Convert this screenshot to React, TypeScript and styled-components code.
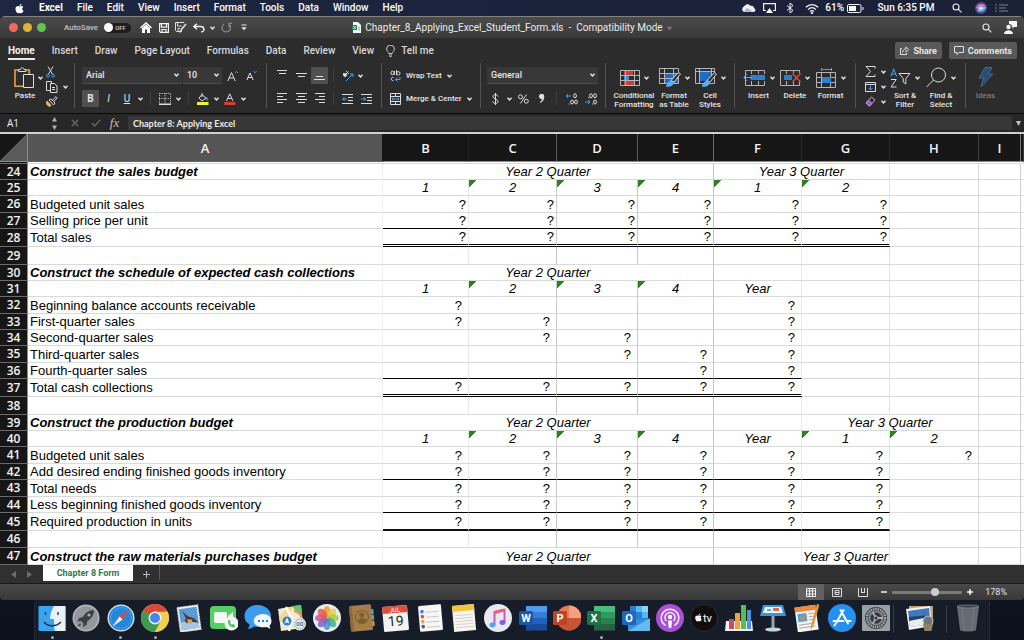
import React from 'react';
import styled, { createGlobalStyle, css } from 'styled-components';
import { FaApple } from 'react-icons/fa';

const ui = "Roboto, 'Liberation Sans', sans-serif";
const sheetFont = "'Liberation Sans', Arial, sans-serif";
const headFont = "'Open Sans', Lato, sans-serif";

const Global = createGlobalStyle`
  *, *::before, *::after { box-sizing: border-box; }
  html, body { margin: 0; background: #0c121d; }
  body { font-family: ${ui}; font-size: 10px; line-height: 12px; color: #fff; overflow: hidden; }
  button, select, input { font: inherit; color: inherit; margin: 0; padding: 0; border: 0; background: none; }
  svg { display: block; flex: none; }
`;

const Desktop = styled.div`
  min-height: 100vh;
  display: flex;
  flex-direction: column;
  background: linear-gradient(#1c2540, #0c121d 97%);
`;

/* ---------- system menu bar ---------- */
const MenuBar = styled.header`
  height: 16px;
  display: flex;
  align-items: center;
  justify-content: space-between;
  padding: 0 15px 0 14px;
  background: linear-gradient(90deg, #1d2742, #1a2036);
`;
const Menus = styled.nav`
  display: flex;
  align-items: center;
  gap: 14px;
`;
const MenuButton = styled.button<{ $strong?: boolean }>`
  font-weight: ${p => (p.$strong ? 700 : 500)};
  white-space: nowrap;
`;
const MenuExtras = styled.div`
  display: flex;
  align-items: center;
  font-weight: 500;
  white-space: nowrap;
`;
const Extra = styled.span<{ $w: number }>`
  width: ${p => p.$w}px;
  display: flex;
  justify-content: center;
`;

/* ---------- window ---------- */
const Window = styled.main`
  flex: 1;
  display: flex;
  flex-direction: column;
  border-radius: 5px 5px 4px 4px;
  overflow: hidden;
  background: #2c2c2c;
`;
const TitleBar = styled.div`
  height: 22px;
  display: grid;
  grid-template-columns: 1fr auto 1fr;
  align-items: center;
  border-top: 1px solid #828282;
  background: linear-gradient(#4b4b4b, #3a3a3a);
  color: #ececec;
`;
const TitleLeft = styled.div`
  display: flex;
  align-items: center;
  padding-left: 9px;
`;
const Lights = styled.div`
  display: flex;
  gap: 5px;
  width: 55px;
`;
const Light = styled.button<{ $c: string }>`
  width: 9px;
  height: 9px;
  border-radius: 50%;
  background: ${p => p.$c};
`;
const AutoSave = styled.label`
  display: flex;
  align-items: center;
  gap: 6px;
  width: 73px;
  font-size: 8px;
  font-weight: 500;
  white-space: nowrap;
  color: #c4c4c4;
`;
const Switch = styled.span`
  width: 27px;
  height: 10px;
  border-radius: 5px;
  background: #1d1d1d;
  display: flex;
  align-items: center;
  gap: 2px;
  font-size: 6px;
  color: #cfcfcf;
`;
const SwitchInput = styled.input`
  appearance: none;
  width: 9px;
  height: 9px;
  border-radius: 50%;
  background: #fff;
`;
const DocTitle = styled.h1`
  margin: 0;
  display: flex;
  align-items: center;
  gap: 4px;
  font-size: 10px;
  font-weight: 400;
  white-space: pre;
`;
const TitleRight = styled.div`
  display: flex;
  justify-content: flex-end;
  align-items: center;
  gap: 12px;
  padding-right: 7px;
`;

const Tabs = styled.nav`
  height: 25px;
  display: flex;
  align-items: center;
  gap: 17px;
  padding: 0 7px 0 8px;
  color: #d8d8d8;
  font-weight: 500;
`;
const TabButton = styled.button<{ $on?: boolean }>`
  height: 18px;
  padding-top: 2px;
  white-space: nowrap;
  border-bottom: 2px solid ${p => (p.$on ? '#e8e8e8' : 'transparent')};
  ${p => p.$on && css`font-weight: 700; color: #f2f2f2;`}
`;
const TellMe = styled.button`
  display: flex;
  align-items: center;
  gap: 6px;
  margin-right: auto;
  margin-left: -5px;
`;
const ActionButton = styled.button`
  height: 17px;
  display: flex;
  align-items: center;
  gap: 4px;
  padding: 0 5px;
  border-radius: 2px;
  background: #595959;
  color: #e6e6e6;
  font-size: 9px;
  font-weight: 700;
`;
const Actions = styled.div`
  display: flex;
  gap: 7px;
`;

/* ---------- ribbon ---------- */
const Ribbon = styled.section`
  height: 51px;
  display: flex;
  border-bottom: 1px solid #0a0a0a;
  font-size: 8px;
  line-height: 9px;
  font-weight: 500;
  color: #e6e6e6;
`;
const Group = styled.div<{ $w: number; $last?: boolean }>`
  width: ${p => p.$w}px;
  height: 45px;
  padding-top: 1px;
  flex: none;
  display: flex;
  flex-direction: column;
  border-right: 1px solid ${p => (p.$last ? 'transparent' : '#525252')};
`;
const Line = styled.div<{ $pad?: number }>`
  height: 23px;
  flex: none;
  display: flex;
  align-items: center;
  padding-left: ${p => p.$pad ?? 7}px;
`;
const Tool = styled.button<{ $w: number; $on?: boolean }>`
  width: ${p => p.$w}px;
  height: 17px;
  flex: none;
  display: flex;
  align-items: center;
  justify-content: center;
  border-radius: 1px;
  font-size: 10px;
  font-weight: 400;
  background: ${p => (p.$on ? '#505050' : 'none')};
`;
const LabelTool = styled.button`
  display: flex;
  align-items: center;
  gap: 5px;
  white-space: nowrap;
`;
const Divider = styled.span`
  width: 1px;
  height: 13px;
  background: #424242;
  margin: 0 5px;
`;
const Picker = styled.label<{ $w: number }>`
  width: ${p => p.$w}px;
  height: 17px;
  display: grid;
  align-items: center;
  margin-right: 1px;
  background: #383838;
  border-bottom: 1px solid #4c4c4c;
  font-size: 9px;
  > * { grid-area: 1 / 1; }
  > svg { justify-self: end; margin-right: 3px; pointer-events: none; }
`;
const PickerSelect = styled.select`
  appearance: none;
  width: 100%;
  padding-left: 4px;
  outline: none;
`;
const BigTools = styled.div<{ $pad: number }>`
  display: flex;
  height: 46px;
  flex: none;
  padding-left: ${p => p.$pad}px;
`;
const BigTool = styled.button<{ $w: number; $dim?: boolean }>`
  width: ${p => p.$w}px;
  flex: none;
  display: flex;
  flex-direction: column;
  align-items: center;
  justify-content: flex-start;
  line-height: 9px;
  white-space: pre;
  color: ${p => (p.$dim ? '#7d7d7d' : 'inherit')};
`;
const BigArt = styled.span`
  height: 27px;
  display: flex;
  align-items: center;
  gap: 4px;
`;
const Stack = styled.div<{ $w: number }>`
  width: ${p => p.$w}px;
  display: flex;
  flex-direction: column;
`;
const StackTool = styled.button`
  height: 15px;
  display: flex;
  align-items: center;
  gap: 5px;
`;

/* ---------- formula bar ---------- */
const FormulaBar = styled.div`
  height: 18px;
  display: flex;
  align-items: center;
  background: #272727;
  font-family: ${headFont};
  font-size: 10px;
  color: #ececec;
`;
const NameBox = styled.input`
  width: 50px;
  padding-left: 7px;
`;
const FormulaInput = styled.input`
  flex: 1;
  min-width: 0;
  height: 14px;
  padding-left: 5px;
  background: #373737;
  font-family: Lato, sans-serif;
  font-size: 9px;
  font-weight: 700;
`;
const MarkButton = styled.button<{ $w: number }>`
  width: ${p => p.$w}px;
  height: 16px;
  display: flex;
  justify-content: center;
  align-items: center;
`;
const Serif = styled.i`
  font-family: 'Liberation Serif', serif;
  font-size: 13px;
  color: #c2c2c2;
`;

/* ---------- sheet ---------- */
const SheetArea = styled.section`
  flex: 1;
  overflow: hidden;
  border-top: 2px solid #d0d0d0;
  background: #fff;
`;
const Sheet = styled.table`
  width: 100%;
  table-layout: fixed;
  border-collapse: separate;
  border-spacing: 0;
  font-family: ${sheetFont};
  font-size: 13px;
  line-height: 14px;
  color: #000;
`;
const ColHead = styled.th<{ $on?: boolean; $edge?: string }>`
  height: 28px;
  padding: 0;
  font-family: ${headFont};
  font-size: 13px;
  font-weight: 600;
  color: #f4f4f4;
  background: ${p => (p.$on ? '#555' : '#161616')};
  border-right: 1px solid ${p => p.$edge ?? '#3a3a3a'};
  border-bottom: 1px solid ${p => (p.$on ? '#3d7d52' : '#8a8a8a')};
`;
const Corner = styled.th`
  padding: 0;
  background: linear-gradient(135deg, #161616 50%, #5a5a5a 50%);
  border: 1px solid #8c8c8c;
  border-width: 0 1px 1px 0;
`;
const SheetRow = styled.tr<{ $h: number }>`
  height: ${p => p.$h}px;
`;
const RowHead = styled.th`
  padding: 0;
  background: #161616;
  border-right: 1px solid #8c8c8c;
  border-bottom: 1px solid #6a6a6a;
  font-family: ${headFont};
  font-size: 12px;
  font-weight: 600;
  color: #f4f4f4;
`;
type Rule = 'single' | 'double' | 'thick';
const ruleBorder = { single: '1px solid #000', double: '3px double #000', thick: '2px solid #111' };
const Cell = styled.td<{ $edge?: string; $rule?: Rule; $flag?: boolean; $align?: string; $pad?: number; $kind?: string }>`
  padding: 1px ${p => p.$pad ?? 0}px 0 ${p => (p.$align === 'left' ? 2 : 0)}px;
  white-space: nowrap;
  text-align: ${p => p.$align ?? 'center'};
  border-right: 1px solid ${p => p.$edge ?? '#e6e6e6'};
  border-bottom: ${p => (p.$rule ? ruleBorder[p.$rule] : '1px solid #dadada')};
  ${p => p.$flag && css`background: linear-gradient(135deg, #2f8020 50%, transparent 50%) 0 0 / 8px 8px no-repeat;`}
  ${p => p.$kind === 'italic' && css`font-style: italic;`}
  ${p => p.$kind === 'title' && css`font-style: italic; font-weight: 700;`}
`;

/* ---------- bottom of window ---------- */
const SheetTabs = styled.nav`
  height: 19px;
  display: flex;
  align-items: flex-start;
  background: #303030;
  border-bottom: 1px solid #1a1a1a;
`;
const Arrow = styled.button<{ $w: number }>`
  width: ${p => p.$w}px;
  height: 18px;
  display: flex;
  align-items: center;
  justify-content: center;
`;
const SheetTab = styled.button`
  width: 90px;
  height: 16px;
  background: #fff;
  color: #2f7a4a;
  font-size: 9px;
  font-weight: 700;
`;
const TabEnd = styled.span`
  width: 1px;
  height: 15px;
  background: #5a5a5a;
`;
const StatusBar = styled.footer`
  height: 16px;
  display: flex;
  justify-content: flex-end;
  align-items: center;
  padding-right: 17px;
  background: linear-gradient(#4a4a4a, #383838);
  font-size: 9px;
  color: #e0e0e0;
`;
const ViewButton = styled.button<{ $on?: boolean }>`
  width: 26px;
  height: 16px;
  display: flex;
  align-items: center;
  justify-content: center;
  background: ${p => (p.$on ? '#606060' : 'none')};
`;
const ZoomButton = styled.button<{ $w: number }>`
  width: ${p => p.$w}px;
  height: 16px;
  display: flex;
  align-items: center;
  justify-content: center;
`;
const ZoomSlider = styled.input`
  appearance: none;
  width: 70px;
  height: 3px;
  border-radius: 1px;
  background: #7a7a7a;
  &::-webkit-slider-thumb {
    appearance: none;
    width: 8px;
    height: 8px;
    border-radius: 50%;
    background: #cdcdcd;
  }
`;
const Percent = styled.output`
  margin-left: 7px;
`;

/* ---------- dock ---------- */
const Dock = styled.nav`
  height: 40px;
  flex: none;
  margin: 0 34px;
  display: flex;
  background: #171c29;
  border: 1px solid #252b3a;
  border-width: 0 1px;
  border-radius: 4px 4px 0 0;
`;
const DockApps = styled.div`
  flex: 1;
  display: grid;
  grid-template-columns: repeat(25, 1fr);
`;
const DockItem = styled.button<{ $w?: number; $running?: boolean }>`
  ${p => p.$w && css`width: ${p.$w}px;`}
  display: flex;
  flex-direction: column;
  align-items: center;
  justify-content: flex-start;
  padding-top: 4px;
  gap: 4px;
  &::after {
    content: '';
    width: 3px;
    height: 3px;
    border-radius: 50%;
    background: ${p => (p.$running ? '#a5abb8' : 'transparent')};
  }
`;
const DockLine = styled.span`
  width: 1px;
  height: 28px;
  margin-top: 5px;
  background: #373d4b;
`;

/* ---------- small drawings ---------- */
type ArtProps = { w: number; h: number; children: React.ReactNode; s?: string };
const Art = ({ w, h, children, s = '#dcdcdc' }: ArtProps) => (
  <svg width={w} height={h} viewBox={`0 0 ${w} ${h}`} fill="none" stroke={s} strokeWidth="1" aria-hidden="true">{children}</svg>
);
const Chevron = ({ c = '#e8e8e8' }: { c?: string }) => (
  <Art w={5} h={4} s={c}><path d="M.5 .7 2.500 2.900 4.500 .7" strokeWidth="1.400" /></Art>
);
const Search = ({ size, c = '#e8e8e8' }: { size: number; c?: string }) => (
  <svg width={size} height={size} viewBox="0 0 10 10" fill="none" stroke={c} strokeWidth="1.1" aria-hidden="true">
    <circle cx="4" cy="4" r="3" /><path d="M6.2 6.2 9.4 9.4" />
  </svg>
);
const Bars = ({ lines }: { lines: [number, number, number][] }) => (
  <Art w={11} h={11}>{lines.map(([x, y, w], i) => <path key={i} d={`M${x} ${y + 0.5}h${w}`} />)}</Art>
);
const Indent = ({ dir }: { dir: 'left' | 'right' }) => (
  <Art w={12} h={10}>
    <path d="M0 .5h11M6 3.5h5M6 6.5h5M0 9.5h11" />
    <path stroke="#4aa3e8" d={dir === 'left' ? 'M5 5H.8M2.6 3 .6 5l2 2' : 'M0 5h4.4M2.8 3l2 2-2 2'} />
  </Art>
);
const Decimals = ({ more }: { more: boolean }) => (
  <Art w={13} h={12}>
    <path stroke="#4aa3e8" d={more ? 'M6 3H1M3 1 1 3l2 2' : 'M1 9h5M4 7l2 2-2 2'} />
    <ellipse cx={more ? 10 : 11} cy="2.8" rx="1.4" ry="2" /><ellipse cx="11" cy="9" rx="1.4" ry="2" />
    {more ? <ellipse cx="7" cy="9" rx="1.4" ry="2" /> : <ellipse cx="7" cy="2.8" rx="1.4" ry="2" />}
    <path d={more ? 'M4.2 10.5v1' : 'M8.7 10.5v1M4.7 4.3v1'} />
  </Art>
);
const GridLines = ({ y = 0 }: { y?: number }) => (
  <path stroke="#b4b4b4" d={`M.5 ${y + 0.5}h19v15h-19zM.5 ${y + 5.5}h19M.5 ${y + 10.5}h19M5.5 ${y + 0.5}v15M14.5 ${y + 0.5}v15`} />
);

const PasteIcon = () => (
  <Art w={20} h={21}>
    <path stroke="#e9a33b" strokeWidth="1.6" d="M4.5 3H1v16.2h8M12 3h3.3v4" />
    <path d="M4.5 4.5v-2h2c0-2.4 3.4-2.4 3.4 0h2v2z" />
    <path fill="#2c2c2c" d="M9.5 7.5h10v13h-10z" />
  </Art>
);
const CutIcon = () => (
  <Art w={9} h={12}><path d="M2 .5 6.4 8M7 .5 2.6 8" /><circle cx="1.9" cy="9.7" r="1.4" stroke="#4aa3e8" /><circle cx="7.1" cy="9.7" r="1.4" stroke="#4aa3e8" /></Art>
);
const CopyIcon = () => (
  <Art w={12} h={12}><path d="M4 9.5H.5v-9h5v2M4.5 2.5h4l2.5 2.5v6.5h-6.5zM6 6.5h3M6 8.5h3" /></Art>
);
const BrushIcon = () => (
  <Art w={12} h={11}>
    <path fill="#e9b765" stroke="#e9b765" d="m1 5 4 4.500-2 1-2.500-2.500z" /><path fill="#2c2c2c" d="m3 4 2-1 4 4-1.500 2zM6.500 4 10 .6l1.200 1.200L8 5.500" />
  </Art>
);
const CondIcon = () => (
  <Art w={20} h={16}>
    <path fill="#c9403a" stroke="none" d="M4 0h9v5H4zM4 11h10v5H4z" /><path fill="#3f8fd8" stroke="none" d="M4 5.5h5v5H4z" /><GridLines />
  </Art>
);
const TableIcon = ({ solid }: { solid?: boolean }) => (
  <Art w={22} h={19}>
    <path fill="#1f6cc4" stroke="none" d={solid ? 'M4 3h12v10H4z' : 'M6 6h13v10H6z'} />
    {solid ? <path stroke="#b4b4b4" d="M.5 .5h19v15H.5zM.5 3.5h19M4.500 .5v15M16.500 .5v12" /> : <GridLines />}
    <path fill="#2c2c2c" d="m12 12.500 7.500-8 2 1.500L15 14z" />
    <path fill="#5aaef2" stroke="#5aaef2" d="M7 18c2-.4 2-4.800 4.800-5.200l2.700 2C14 18 10 19 7 18z" />
  </Art>
);
const InsertIcon = () => (
  <Art w={23} h={16}>
    <path stroke="#b4b4b4" d="M2.500 .5h19v15h-19zM8.500 .5v15M15.500 .5v15" /><path fill="#2f7fd0" stroke="#2c2c2c" d="M7 4.500h15.500v6H7z" />
    <path stroke="#5aaef2" d="M9 7.500H1M4 4.200.8 7.500 4 10.800" />
  </Art>
);
const DeleteIcon = () => (
  <Art w={21} h={16}>
    <path stroke="#b4b4b4" d="M.5 .5h19v15H.5zM6.500 .5v15M13.500 .5v15" /><path fill="#2f7fd0" stroke="#2c2c2c" d="M3.500 4.500h9v6h-9z" /><path stroke="none" fill="#2c2c2c" d="M13 3h8v9h-8z" />
    <path stroke="#e0503f" strokeWidth="1.3" d="m12.500 3.500 8 8.500M20.500 3.500l-8 8.500" />
  </Art>
);
const FormatIcon = () => (
  <Art w={21} h={20}><path stroke="#4aa3e8" d="M5.500 0v3M15.500 0v3M5.500 1.500h10" /><GridLines y={4} /><path fill="#2f7fd0" stroke="none" d="M6 9h9v6H6z" /></Art>
);
const SortIcon = () => (
  <Art w={21} h={20}>
    <path stroke="#4aa3e8" d="M.8 8.500 3.700.8l2.900 7.700M1.800 6h3.800" /><path d="M1 11.500h5.200L1 19h5.500" /><path d="M9 5.500h11l-4.200 5v5.500l-2.600-2v-3.500z" />
  </Art>
);
const FindIcon = () => (
  <Art w={21} h={21}><circle cx="12.500" cy="8" r="7" /><path d="M7.500 13 .6 20" /></Art>
);
const BoltIcon = () => (
  <Art w={16} h={21} s="#44678c"><path fill="#2c4d70" d="M7 .5h7l-3.500 6.500h4.500L3 20l2.500-9H1z" /></Art>
);

/* ---------- sheet data ---------- */
const columns = [
  { id: 'B', w: 86, edge: '#e9e9e9', head: '#262626' },
  { id: 'C', w: 88, edge: '#c9c9c9', head: '#5c5c5c' },
  { id: 'D', w: 81, edge: '#c9c9c9', head: '#5c5c5c' },
  { id: 'E', w: 76, edge: '#c4c4c4', head: '#6c6c6c' },
  { id: 'F', w: 88, edge: '#e9e9e9', head: '#2a2a2a' },
  { id: 'G', w: 88, edge: '#e2e2e2', head: '#2a2a2a' },
  { id: 'H', w: 89, edge: '#d8d8d8', head: '#444' },
  { id: 'I', w: 42, edge: '#cfcfcf', head: '#777' },
];
type RowSpec = {
  n: number; h: number; label?: string; title?: boolean; marks?: string; indent?: boolean;
  heads?: Record<string, string>; flags?: string; spans?: Record<string, [number, string]>;
  rule?: Rule; ruled?: string;
};
const y2: Record<string, [number, string]> = { B: [4, 'Year 2 Quarter'] };
const rows: RowSpec[] = [
  { n: 24, h: 16, label: 'Construct the sales budget', title: true, spans: { ...y2, F: [2, 'Year 3 Quarter'] } },
  { n: 25, h: 16, heads: { B: '1', C: '2', D: '3', E: '4', F: '1', G: '2' }, flags: 'CDEFG' },
  { n: 26, h: 17, label: 'Budgeted unit sales', marks: 'BCDEFG' },
  { n: 27, h: 16, label: 'Selling price per unit', marks: 'BCDEFG', rule: 'single', ruled: 'BCDEFG' },
  { n: 28, h: 18, label: 'Total sales', marks: 'BCDEFG', rule: 'double', ruled: 'BCDEFG' },
  { n: 29, h: 18 },
  { n: 30, h: 16, label: 'Construct the schedule of expected cash collections', title: true, spans: y2 },
  { n: 31, h: 16, heads: { B: '1', C: '2', D: '3', E: '4', F: 'Year' }, flags: 'CDE' },
  { n: 32, h: 17, label: 'Beginning balance accounts receivable', marks: 'BF', indent: true },
  { n: 33, h: 16, label: 'First-quarter sales', marks: 'BCF', indent: true },
  { n: 34, h: 16, label: 'Second-quarter sales', marks: 'CDF', indent: true },
  { n: 35, h: 17, label: 'Third-quarter sales', marks: 'DEF', indent: true },
  { n: 36, h: 16, label: 'Fourth-quarter sales', marks: 'EF', indent: true, rule: 'single', ruled: 'BCDEF' },
  { n: 37, h: 18, label: 'Total cash collections', marks: 'BCDEF', indent: true, rule: 'double', ruled: 'BCDEF' },
  { n: 38, h: 18 },
  { n: 39, h: 16, label: 'Construct the production budget', title: true, spans: { ...y2, G: [2, 'Year 3 Quarter'] } },
  { n: 40, h: 16, heads: { B: '1', C: '2', D: '3', E: '4', F: 'Year', G: '1', H: '2' }, flags: 'CDEGH' },
  { n: 41, h: 17, label: 'Budgeted unit sales', marks: 'BCDEFGH', indent: true },
  { n: 42, h: 16, label: 'Add desired ending finished goods inventory', marks: 'BCDEFG', indent: true, rule: 'single', ruled: 'BCDEFG' },
  { n: 43, h: 17, label: 'Total needs', marks: 'BCDEFG', indent: true },
  { n: 44, h: 16, label: 'Less beginning finished goods inventory', marks: 'BCDEFG', indent: true, rule: 'single', ruled: 'BCDEFG' },
  { n: 45, h: 18, label: 'Required production in units', marks: 'BCDEFG', indent: true, rule: 'thick', ruled: 'BCDEFG' },
  { n: 46, h: 17 },
  { n: 47, h: 17, label: 'Construct the raw materials purchases budget', title: true, spans: { ...y2, G: [1, 'Year 3 Quarter'] } },
];

function rowCells(r: RowSpec) {
  const out: React.ReactNode[] = [];
  for (let i = 0; i < columns.length; i++) {
    const c = columns[i];
    const span = r.spans?.[c.id];
    if (span) {
      const last = columns[i + span[0] - 1];
      out.push(<Cell key={c.id} colSpan={span[0]} $kind="italic" $edge={last.edge}>{span[1]}</Cell>);
      i += span[0] - 1;
      continue;
    }
    const rule = r.ruled?.includes(c.id) ? r.rule : undefined;
    if (r.marks?.includes(c.id)) {
      out.push(<Cell key={c.id} $align="right" $pad={r.indent ? 6 : 2} $edge={c.edge} $rule={rule}>?</Cell>);
    } else {
      out.push(
        <Cell key={c.id} $kind="italic" $edge={c.edge} $rule={rule} $flag={r.flags?.includes(c.id)}>{r.heads?.[c.id]}</Cell>,
      );
    }
  }
  return out;
}

/* ---------- dock art ---------- */
const Office = ({ letter, dark, tones, round }: { letter: string; dark: string; tones: string[]; round?: boolean }) => (
  <>
    {round ? (
      <><circle cx="16" cy="14" r="12.500" fill={tones[1]} /><path d="M16 1.500A12.500 12.500 0 0 1 28.500 14H16z" fill={tones[0]} /><path d="M3.500 14h25a12.500 12.500 0 0 1-25 0z" fill={tones[2]} /></>
    ) : (
      <><path d="M7 2h21v7H7z" fill={tones[0]} /><path d="M7 8h21v6H7z" fill={tones[1]} /><path d="M7 14h21v7H7z" fill={tones[2]} /><path d="M7 20h21v6.500H7z" fill={tones[3]} /></>
    )}
    <rect x="0" y="7" width="14" height="14" rx="1.500" fill={dark} />
    <text x="7" y="18" textAnchor="middle" fontSize="11" fontWeight="700" fill="#fff" fontFamily={ui}>{letter}</text>
  </>
);
const dockArt: [string, React.ReactNode, boolean?][] = [
  ['Finder', <><rect x=".5" y="2" width="27" height="25" rx="1" fill="#38a5f2" /><path d="M16 2c-3 5-4 9-4 13h4c0 5 0 8 1 12h10.500V2z" fill="#e9f1f8" /><path d="M6 18c4 5 12 5 17 0M7.500 8v3M20 8v3" stroke="#1b2c44" strokeWidth="1.300" fill="none" /></>, true],
  ['Launchpad', <><circle cx="14" cy="14" r="13.500" fill="#b4b9bd" /><circle cx="14" cy="14" r="12" fill="#92989c" /><path d="M22 6c-5 0-9 3-11 7l-4 1-1.500 3.500L9 17l2.500 2.500L11 23l3.500-2 .8-4C19 15 22 11 22 6zM8 19l-3 4 4-2z" fill="#3b4046" /><circle cx="17" cy="11" r="1.600" fill="#a9aeb2" /></>],
  ['Safari', <><circle cx="14" cy="14" r="13.500" fill="#dfe7ee" /><circle cx="14" cy="14" r="12.200" fill="#2388dc" /><circle cx="14" cy="14" r="10.300" fill="none" stroke="#8cc8f5" strokeWidth="1" strokeDasharray="1 1.500" /><path d="m22.500 5.500-10 7 3 3z" fill="#ec4339" /><path d="m5.500 22.500 7-10 3 3z" fill="#f3f5f7" /></>, true],
  ['Chrome', <><circle cx="14" cy="14" r="14" fill="#e8c13b" /><path d="M14 14 1.900 7A14 14 0 0 1 26.100 7z" fill="#d9483b" /><path d="M1.900 7A14 14 0 0 0 14 28l5.800-10.300L14 14z" fill="#3d9a50" /><path d="M14 7.700h12.500A14 14 0 0 1 14 28l5.600-11z" fill="#f2ce4e" /><circle cx="14" cy="14" r="6.400" fill="#f5f5f5" /><circle cx="14" cy="14" r="5" fill="#4a84ec" /></>, true],
  ['Mail', <g transform="rotate(-8 14 14)"><path d="M3.500 2h21v25h-21z" fill="#f2f2ee" stroke="#c7cbd0" strokeDasharray="1.500 1" /><path d="M5 4h18v21H5z" fill="#5c9bd8" /><path d="M5 18c6-3 12-1 18 1v6H5z" fill="#a7c6df" /><path d="m8 6 5 6 6 3 4 5-7-2-5 1-2-3 2-2z" fill="#4e3b2c" /><path d="m12 15 5 1-1 4-4-1z" fill="#d0a25a" /></g>],
  ['FaceTime', <><rect x="0" y="2" width="26" height="23" rx="4" fill="#55cf62" /><rect x="4" y="8" width="13" height="11" rx="2" fill="#f4f8f4" /><path d="m18 12 5-4v10l-5-3z" fill="#f4f8f4" /><circle cx="21.500" cy="19.500" r="7" fill="#f2f4f3" /><path d="M18 17c0 4 3 7 6.500 6l.8-1.500-2.300-1.500-1.200.7-1.800-1.900.7-1.300-1.500-2z" fill="#4cc35a" /></>],
  ['Messages', <><path d="M14 1C6 1 .5 6 .5 12c0 4 2 7 5 8.500 0 2-1 3.500-2 4.500 3 0 5-1 6.500-2.500 9 1.500 17-3 17-10.500C27 6 21 1 14 1z" fill="#3c9df0" /><path d="M19 10c5 0 8.500 3 8.500 7 0 2-.8 3.500-2 4.500l.8 3.500-3.500-2c-8 1.500-13-2-13-6s4-7 9.200-7z" fill="#f1f6fa" /><path d="M14 17h2M18 17h2M22 17h2" stroke="#2b7fd0" strokeWidth="2" /></>],
  ['Maps', <g><path d="m0 5 23-4 2 23-22 3z" fill="#f3ead0" /><path d="m1 13 8-9 6-1-6 12-7 3z" fill="#f5d98a" /><path d="m14 2 9-1 1 10-5-2z" fill="#68c567" /><path d="m8 3 6 12-3 12" stroke="#fff" strokeWidth="2.500" fill="none" /><circle cx="9" cy="17" r="4.500" fill="#2e7fe5" /><path d="m9 13.500 2.500 6-2.500-1.300L6.500 19.500z" fill="#fff" /><path d="M16 7c5 1 8 5 8 9" stroke="#f08b62" strokeWidth="2" fill="none" /><circle cx="21.500" cy="20" r="6.500" fill="#e5e9ee" /><circle cx="21.500" cy="20" r="4.800" fill="none" stroke="#6a8494" strokeDasharray="1 1" /><path d="M19 18.500h2v3h-2zM22.500 18.500h2v3h-2z" fill="none" stroke="#54707f" strokeWidth=".8" /></g>],
  ['Photos', <><circle cx="14" cy="14" r="14" fill="#e9ecef" />{['#f19a34', '#e9cf3f', '#a6cc48', '#47b184', '#4391d0', '#7d68c4', '#c45799', '#e65a48'].map((c, i) => <ellipse key={c} cx="14" cy="7.800" rx="3.700" ry="5.800" fill={c} opacity=".85" transform={`rotate(${i * 45} 14 14)`} />)}</>],
  ['Contacts', <g transform="rotate(-5 14 14)"><path d="M24 6h3v5h-3z" fill="#50a8df" /><path d="M24 12h3v5h-3z" fill="#62b76a" /><path d="M24 18h3v5h-3z" fill="#e2963b" /><rect x="3" y="1" width="22" height="26" rx="1.500" fill="#a67c48" /><path d="M3 2h3v24H3z" fill="#8f693b" /><circle cx="15" cy="13" r="6.500" fill="none" stroke="#805c33" /><circle cx="15" cy="11" r="2.500" fill="#805c33" /><path d="M10.500 17c1-4 8-4 9 0-2 3-7 3-9 0z" fill="#805c33" /></g>],
  ['Calendar', <g transform="rotate(-5 14 14)"><rect x="2" y="2" width="25" height="25" rx="1" fill="#f3f3f3" /><path d="M2 2h25v7H2z" fill="#dc4d42" /><text x="14.500" y="8" textAnchor="middle" fontSize="6" fill="#fff" fontFamily={ui}>JUL</text><text x="14.500" y="22" textAnchor="middle" fontSize="14" fill="#2a2a2a" fontFamily={ui}>19</text></g>],
  ['Reminders', <g transform="rotate(-5 14 14)"><rect x="3" y="1" width="23" height="26" rx="1.500" fill="#f7f7f8" />{['#3e7be8', '#e1503f', '#eda43a', '#5a5f68'].map((c, i) => <g key={c}><circle cx="6.500" cy={7 + i * 5} r="1.800" fill={c} /><path d={`M10 ${8 + i * 5}h13`} stroke="#c5c8cd" /></g>)}</g>],
  ['Notes', <g transform="rotate(-5 14 14)"><path d="M3 1h22v26H3z" fill="#f6f5f0" /><path d="M3 1h22v6H3z" fill="#efc63b" /><path d="M5 11h18M5 14h18M5 17h18M5 20h18M5 23h18" stroke="#d6d5d0" /></g>],
  ['Music', <><circle cx="14" cy="14" r="14" fill="#e9eaf0" /><path d="M10.500 21V8l10-2.200v12.500" stroke="#c958bd" strokeWidth="2" fill="none" /><path d="M10.500 8.500 20.500 6" stroke="#ee5c7c" strokeWidth="3" /><ellipse cx="8.500" cy="21" rx="3" ry="2.400" fill="#51a5ee" /><ellipse cx="18.500" cy="18.500" rx="3" ry="2.400" fill="#835ce0" /></>],
  ['Word', <Office letter="W" dark="#1c54b2" tones={['#519de9', '#347ed4', '#2560be', '#1b4a9c']} />],
  ['PowerPoint', <Office letter="P" dark="#bd4425" tones={['#f5a084', '#e87a58', '#ca5334']} round />],
  ['Excel', <Office letter="X" dark="#217144" tones={['#48bd7e', '#2e9c5f', '#2b7e4e', '#266343']} />, true],
  ['Outlook', <><path d="M8 2h18v15H8z" fill="#2a7fd0" /><path d="M14 2h6v6h-6zM20 8h6v6h-6z" fill="#56b9ef" /><path d="M20 2h6v6h-6z" fill="#8ad5f7" /><path d="M6 15h22v12H6z" fill="#2f92dc" /><path d="m28 14-22 13h22z" fill="#65baee" /><rect y="7" width="14" height="14" rx="1.500" fill="#1d68bd" /><text x="7" y="18" textAnchor="middle" fontSize="11" fontWeight="700" fill="#fff" fontFamily={ui}>O</text></>],
  ['Podcasts', <><circle cx="14" cy="14" r="14" fill="#a950d6" /><g fill="none" stroke="#f6ecfa" strokeWidth="1.500"><path d="M9.500 21.500a8.800 8.800 0 1 1 9 0M10.500 17a5 5 0 1 1 7 0" /></g><circle cx="14" cy="13" r="2.200" fill="#fff" /><path d="M12 16.500h4l-.7 7.500h-2.600z" fill="#fff" /></>],
  ['TV', <><circle cx="14" cy="14" r="13.500" fill="#0e0e0f" stroke="#2c2d30" /><g transform="translate(4 9)"><FaApple size={9} color="#fff" /></g><text x="13" y="18" fontSize="11" fill="#fff" fontFamily={ui}>tv</text></>],
  ['Numbers', <><path d="M1 17h26l1 10H0z" fill="#eef0f1" /><path d="M4 15h5v10H4z" fill="#d34b52" /><path d="M10 9h5v16h-5z" fill="#eca441" /><path d="M16 1h5v24h-5z" fill="#57be4f" /><path d="M22 6h4v19h-4z" fill="#4a95e2" /></>],
  ['Keynote', <><path d="M4 1h20l3 11H1z" fill="#3397de" /><path d="M6 3h16l2 6H4z" fill="#eaf4fb" /><path d="M8 5h4v2H8z" fill="#4fb4e9" /><path d="M14 4h6v3h-6z" fill="#e6674f" /><path d="M12.500 12h3v12h-3z" fill="#8fa6b5" /><ellipse cx="14" cy="25.500" rx="8" ry="2" fill="#c6d2da" /></>],
  ['Pages', <g transform="rotate(-8 14 14)"><path d="M3 2h21v25H3z" fill="#f3f3f1" /><path d="M3 2h21v5H3z" fill="#ec8b3b" /><path d="M5 9h9v8H5z" fill="#4da2dc" /><path d="m7 11 3 2 3-2-1 4H8z" fill="#ee8339" /><path d="M16 10h6M16 13h6M16 16h6M5 20h16M5 23h16" stroke="#a7a9ab" /><path d="m26 1-9 21-1 4 3-3L28 3z" fill="#e6952f" /></g>],
  ['App Store', <><circle cx="14" cy="14" r="14" fill="#2591ee" /><path d="m15.500 6-7 12.500M12.500 6l7.500 13.500M5.500 17h10M18.500 17h4M7.300 20l-.8 1.400" stroke="#fff" strokeWidth="2" strokeLinecap="round" /></>],
  ['Preferences', <><rect y="1" width="28" height="26" rx="1" fill="#98a0a7" /><circle cx="14" cy="14" r="11" fill="#35393d" /><circle cx="14" cy="14" r="9" fill="none" stroke="#a7acb0" strokeWidth="2.500" strokeDasharray="1.500 .8" /><circle cx="14" cy="14" r="6.500" fill="none" stroke="#8c9296" strokeWidth="1.500" /><path d="M14 14h7M14 14l-3.500-6M14 14l-3.500 6" stroke="#aab0b4" strokeWidth="1.800" /><circle cx="14" cy="14" r="2" fill="#2b2e31" stroke="#aab0b4" /></>],
];
const DockSvg = ({ children }: { children: React.ReactNode }) => (
  <svg width="28" height="28" viewBox="0 0 28 28" aria-hidden="true">{children}</svg>
);

export default function App() {
  return (
    <Desktop>
      <Global />
      <MenuBar>
        <Menus aria-label="Menu bar">
          <MenuButton aria-label="Apple"><FaApple size={11} /></MenuButton>
          <MenuButton $strong>Excel</MenuButton>
          {['File', 'Edit', 'View', 'Insert', 'Format', 'Tools', 'Data', 'Window', 'Help'].map(m => <MenuButton key={m}>{m}</MenuButton>)}
        </Menus>
        <MenuExtras>
          <Extra $w={18}><Art w={15} h={10} s="none"><path fill="#eceff4" d="M3 9a3 3 0 0 1 0-5.500C4 1 8 0 9.500 3c2-.6 3.500.6 3.500 2.300 2 .5 2 3.700-.5 3.700z" /><path fill="#aab2c2" d="m6 5 6 3.800H3z" /></Art></Extra>
          <Extra $w={24}><Art w={13} h={10} s="#f0f2f6"><path d="M3 7.500H.6V.6h11.800v6.900H10" strokeWidth="1.200" /><path fill="#fff" stroke="none" d="m6.500 5 3.500 5H3z" /></Art></Extra>
          <Extra $w={18}><Art w={8} h={12} s="#f0f2f6"><path d="m1 3.500 6 5-3 2.500V1l3 2.500-6 5" /></Art></Extra>
          <Extra $w={26}><Art w={14} h={11} s="#f0f2f6"><path d="M.8 4.300C4.500.6 9.500.6 13.200 4.300M3 6.600c2.500-2.400 5.500-2.400 8 0M5 8.600c1.300-1.200 2.700-1.200 4 0" strokeWidth="1.300" /><circle cx="7" cy="10" r=".8" fill="#fff" /></Art></Extra>
          <span>61%</span>
          <Extra $w={22}><Art w={17} h={9} s="#f0f2f6"><rect x=".5" y=".5" width="13.500" height="8" rx="1.500" /><path fill="#fff" stroke="none" d="M2 2h7v5H2z" /><path d="M16 3v3" /></Art></Extra>
          <Extra $w={80}>Sun 6:35 PM</Extra>
          <Extra $w={22}><Search size={10} c="#f0f2f6" /></Extra>
          <Extra $w={25}><Art w={12} h={12} s="none"><circle cx="6" cy="6" r="6" fill="#56489b" /><path d="M1 6c2-5 7-5 10-2-2 0-5 1-6 4z" fill="#e07bb5" /><path d="M2 9c1-3 5-5 9-4-1 4-5 6-9 4z" fill="#65cbe4" /><path d="M4 6c1-1 3-1 4 0-1 1.500-3 1.500-4 0z" fill="#fff" /></Art></Extra>
          <Extra $w={16}><Art w={13} h={8} s="#79819a"><path d="M0 1h2M4 1h9M0 4h2M4 4h7M0 7h2M4 7h9" /></Art></Extra>
        </MenuExtras>
      </MenuBar>

      <Window>
        <TitleBar>
          <TitleLeft>
            <Lights>
              <Light $c="#ed6a5e" aria-label="Close" /><Light $c="#dfb13f" aria-label="Minimise" /><Light $c="#62c554" aria-label="Full screen" />
            </Lights>
            <AutoSave>AutoSave<Switch><SwitchInput type="checkbox" aria-label="AutoSave" />OFF</Switch></AutoSave>
            <Tool $w={18} aria-label="Home"><Art w={12} h={11} s="#fff"><path d="m.5 6 5.500-5 5.500 5" strokeWidth="1.400" /><path d="M2 6v5h3V7.500h2V11h3V6L6 2.500z" fill="#fff" stroke="none" /></Art></Tool>
            <Tool $w={17} aria-label="Save"><Art w={10} h={10} s="#f2f2f2"><path d="M.6.6h8.800v8.800H1.600l-1-1zM2.500.6v3.500h5V.6M3 9.400V6.500h4v2.900" strokeWidth="1.200" /></Art></Tool>
            <Tool $w={18} aria-label="Save as"><Art w={12} h={11} s="#dedede"><path d="M7 9.500H1.500l-1-1v-8H9M2.500.6v3.500h4M3 9.400V6.500h2" /><path d="m6 8 5-6M6 8l-1 2.500" strokeWidth="1.700" /></Art></Tool>
            <Tool $w={18} aria-label="Undo"><Art w={12} h={10} s="#f2f2f2"><path d="M4 .8.9 3.500 4 6.200M1 3.500h6.500c4.500 0 4.500 5.500.5 5.500" strokeWidth="1.400" /></Art></Tool>
            <Tool $w={9} aria-label="Undo list"><Chevron /></Tool>
            <Tool $w={18} aria-label="Redo"><Art w={11} h={11} s="#8a8a8a"><path d="M3 2a4.300 4.300 0 1 0 5 .3M8 5.500V1.300h3" strokeWidth="1.200" /></Art></Tool>
            <Tool $w={18} aria-label="Customise toolbar"><Art w={6} h={7} s="#e8e8e8"><path d="M.5 1h5" /><path d="M.3 3.300h5.400L3 6.300z" fill="#e8e8e8" stroke="none" /></Art></Tool>
          </TitleLeft>
          <DocTitle>
            <Art w={9} h={11} s="none"><path d="M1 0h5l3 3v8H1z" fill="#f3f5f3" /><path d="M0 3h5v5H0z" fill="#25824d" /><path d="m1.300 4 2.500 3M3.800 4 1.300 7" stroke="#fff" strokeWidth=".8" /><path d="M6 6h2M6 8h2" stroke="#6fb68d" /></Art>
            Chapter_8_Applying_Excel_Student_Form.xls  -  Compatibility Mode
            <Chevron c="#828282" />
          </DocTitle>
          <TitleRight>
            <Search size={10} />
            <Art w={13} h={13} s="none"><path d="M5 0h8v6h-3L8.500 7.500V6H8a3 3 0 0 0-3-3z" fill="#f4f4f4" /><circle cx="4.500" cy="6" r="2.200" fill="#f4f4f4" /><path d="M0 13c0-5 9-5 9 0z" fill="#f4f4f4" /></Art>
          </TitleRight>
        </TitleBar>

        <Tabs aria-label="Ribbon tabs">
          <TabButton $on>Home</TabButton>
          {['Insert', 'Draw', 'Page Layout', 'Formulas', 'Data', 'Review', 'View'].map(t => <TabButton key={t}>{t}</TabButton>)}
          <TellMe><Art w={9} h={12} s="#c8c8c8"><path d="M2.800 8.500C2.500 7 .6 6 .6 4a3.900 3.900 0 0 1 7.800 0c0 2-1.900 3-2.200 4.500zM3 10h3M3.500 11.500h2" /></Art>Tell me</TellMe>
          <Actions>
            <ActionButton><Art w={9} h={9} s="#e0e0e0"><path d="M2 2.500H.5v6h6V7M2.500 6.500C3 4 4 3 6 3V1l2.600 2.700L6 6.200V4.500" /></Art>Share</ActionButton>
            <ActionButton><Art w={10} h={9} s="#e0e0e0"><path d="M.5 .5h9v6H5l-2 2v-2H.5z" /></Art>Comments</ActionButton>
          </Actions>
        </Tabs>

        <Ribbon aria-label="Home ribbon">
          <Group $w={75}>
            <BigTools $pad={10}>
              <BigTool $w={36}><BigArt><PasteIcon /><Chevron /></BigArt>{'Paste   '}</BigTool>
              <Stack $w={26}>
                <StackTool aria-label="Cut"><CutIcon /></StackTool>
                <StackTool aria-label="Copy"><CopyIcon /><Chevron /></StackTool>
                <StackTool aria-label="Format painter"><BrushIcon /></StackTool>
              </Stack>
            </BigTools>
          </Group>

          <Group $w={192}>
            <Line>
              <Picker $w={100}><PickerSelect aria-label="Font"><option>Arial</option></PickerSelect><Chevron /></Picker>
              <Picker $w={39}><PickerSelect aria-label="Font size"><option>10</option></PickerSelect><Chevron /></Picker>
              <Tool $w={19} aria-label="Grow font"><Art w={12} h={12}><path d="M.8 11 4.500 2.500 8.200 11M2 8h5" /><path d="m8 3 1.500-1.600L11 3" stroke="#4aa3e8" /></Art></Tool>
              <Tool $w={19} aria-label="Shrink font"><Art w={11} h={11}><path d="M.8 10 4 3l3.200 7M2 7.500h4" /><path d="m7.500 1.200 1.500 1.600 1.500-1.600" stroke="#4aa3e8" /></Art></Tool>
            </Line>
            <Line>
              <Tool $w={17} $on><b>B</b></Tool>
              <Tool $w={19}><i>I</i></Tool>
              <Tool $w={18}><u>U</u></Tool>
              <Tool $w={9} aria-label="Underline styles"><Chevron /></Tool>
              <Divider />
              <Tool $w={18} aria-label="Borders"><Art w={12} h={12}><path d="M.5 .5h11v11M.5 0v11M6 0v11M0 5.500h11" strokeDasharray="1 1.200" /><path d="M0 11.300h12" strokeWidth="1.400" /></Art></Tool>
              <Tool $w={9} aria-label="Border styles"><Chevron /></Tool>
              <Divider />
              <Tool $w={18} aria-label="Fill colour"><Art w={12} h={12}><path d="m5 1.500 4 3.500-4 3-3-3zM5 0v4" /><path d="M10 4.500c1 1.500 1 2.500 0 2.800-1-.3-1-1.300 0-2.800z" stroke="#4aa3e8" /><path d="M0 10.500h11.500" stroke="#f7ef3b" strokeWidth="3" /></Art></Tool>
              <Tool $w={9} aria-label="Fill colours"><Chevron /></Tool>
              <Tool $w={18} aria-label="Font colour"><Art w={12} h={12}><path d="M2.500 8 5.700.8 9 8M3.800 5.500h4" /><path d="M.3 10.500h11" stroke="#e23b2d" strokeWidth="3" /></Art></Tool>
              <Tool $w={9} aria-label="Font colours"><Chevron /></Tool>
            </Line>
          </Group>

          <Group $w={115}>
            <Line $pad={6}>
              <Tool $w={19} aria-label="Align top"><Bars lines={[[0, 0, 10], [2, 3, 7], [0, 6, 0]]} /></Tool>
              <Tool $w={19} aria-label="Align middle"><Bars lines={[[0, 3, 11], [2, 6, 7]]} /></Tool>
              <Tool $w={17} $on aria-label="Align bottom"><Bars lines={[[2, 6, 7], [0, 9, 11]]} /></Tool>
              <Divider />
              <Tool $w={17} aria-label="Orientation"><Art w={12} h={12}><path d="M2 6 6.500 1.500M1 3l3 3M4 1l3 3" /><circle cx="3" cy="5" r="1.500" /><path d="m4 11 6.500-6.500M8 4h3v3" stroke="#4aa3e8" /></Art></Tool>
              <Tool $w={9} aria-label="Orientations"><Chevron /></Tool>
            </Line>
            <Line $pad={6}>
              <Tool $w={19} aria-label="Align left"><Bars lines={[[0, 0, 10], [0, 3, 6], [0, 6, 10], [0, 9, 6]]} /></Tool>
              <Tool $w={19} aria-label="Align centre"><Bars lines={[[0, 0, 11], [2, 3, 7], [0, 6, 11], [2, 9, 7]]} /></Tool>
              <Tool $w={17} aria-label="Align right"><Bars lines={[[1, 0, 10], [5, 3, 6], [1, 6, 10], [5, 9, 6]]} /></Tool>
              <Divider />
              <Tool $w={18} aria-label="Decrease indent"><Indent dir="left" /></Tool>
              <Tool $w={19} aria-label="Increase indent"><Indent dir="right" /></Tool>
            </Line>
          </Group>

          <Group $w={99}>
            <Line $pad={8}><LabelTool><Art w={11} h={12}><circle cx="2.500" cy="3" r="1.700" /><path d="M4.300 1v4M6.500 0v5" /><circle cx="8.300" cy="3.300" r="1.700" /><path d="M3.500 7.500c-3-1-3 4 0 3" /><path d="M10 7v2.500H5.500M7.500 7.500l-2 2 2 2" stroke="#4aa3e8" /></Art>Wrap Text<Chevron /></LabelTool></Line>
            <Line $pad={8}><LabelTool><Art w={11} h={12}><path d="M.5 .5h10v11H.5zM5.500 .5v3M5.500 8.500v3M.5 3.500h10M.5 8.500h10" /><path d="M2 6h7M3.500 4.500 2 6l1.500 1.500M7.500 4.500 9 6 7.500 7.500" stroke="#4aa3e8" /></Art>Merge &amp; Center<Chevron /></LabelTool></Line>
          </Group>

          <Group $w={125}>
            <Line $pad={6}><Picker $w={111}><PickerSelect aria-label="Number format"><option>General</option></PickerSelect><Chevron /></Picker></Line>
            <Line $pad={6}>
              <Tool $w={17} aria-label="Currency"><Art w={7} h={12}><path d="M6 3.500C5.500 1 1 1 1 3.500S6 6 6 8.500 1 11 .7 8.300M3.500 0v12" /></Art></Tool>
              <Tool $w={10} aria-label="Currencies"><Chevron /></Tool>
              <Tool $w={19} aria-label="Percent"><Art w={11} h={10}><circle cx="2.500" cy="2.800" r="2" /><circle cx="8.300" cy="7.200" r="2" /><path d="M8.500 .5 2.300 9.500" /></Art></Tool>
              <Tool $w={18} aria-label="Comma style"><Art w={6} h={9} s="none"><path d="M0 2.500a2.600 2.600 0 0 1 5.200-.2C5.500 5 4 7.500 1.500 9L1 8.200C2.300 7 2.900 6 2.900 5 1.200 5.300 0 4 0 2.500z" fill="#dedede" /></Art></Tool>
              <Divider />
              <Tool $w={19} aria-label="Increase decimal"><Decimals more /></Tool>
              <Tool $w={18} aria-label="Decrease decimal"><Decimals more={false} /></Tool>
            </Line>
          </Group>

          <Group $w={129}>
            <BigTools $pad={7}>
              <BigTool $w={42}><BigArt><CondIcon /><Chevron /></BigArt>{'Conditional\nFormatting'}</BigTool>
              <BigTool $w={38}><BigArt><TableIcon /><Chevron /></BigArt>{'Format\nas Table'}</BigTool>
              <BigTool $w={34}><BigArt><TableIcon solid /><Chevron /></BigArt>{'Cell\nStyles'}</BigTool>
            </BigTools>
          </Group>

          <Group $w={121}>
            <BigTools $pad={5}>
              <BigTool $w={37}><BigArt><InsertIcon /><Chevron /></BigArt>Insert</BigTool>
              <BigTool $w={36}><BigArt><DeleteIcon /><Chevron /></BigArt>Delete</BigTool>
              <BigTool $w={35}><BigArt><FormatIcon /><Chevron /></BigArt>Format</BigTool>
            </BigTools>
          </Group>

          <Group $w={110}>
            <BigTools $pad={9}>
              <Stack $w={22}>
                <StackTool aria-label="AutoSum"><Art w={11} h={11}><path d="M10 2.500V.5H1L5.500 5.500 1 10.500h9v-2" /></Art><Chevron /></StackTool>
                <StackTool aria-label="Fill"><Art w={11} h={10}><path d="M.5 .5h10v9H.5zM.5 2.500h10" /><path d="M5.500 3.500v4.500M3.500 6l2 2 2-2" stroke="#4aa3e8" /></Art><Chevron /></StackTool>
                <StackTool aria-label="Clear"><Art w={11} h={11} s="#d79be6"><path d="m1 7 5.500-6L10 4 4.500 10z" /><path d="m1 7 2.500-2.700L7 7.300 4.500 10z" fill="#a24fbd" /></Art><Chevron /></StackTool>
              </Stack>
              <BigTool $w={36}><BigArt><SortIcon /><Chevron /></BigArt>{'Sort &\nFilter'}</BigTool>
              <BigTool $w={36}><BigArt><FindIcon /><Chevron /></BigArt>{'Find &\nSelect'}</BigTool>
            </BigTools>
          </Group>

          <Group $w={40} $last>
            <BigTools $pad={1}><BigTool $w={37} $dim><BigArt><BoltIcon /></BigArt>Ideas</BigTool></BigTools>
          </Group>
        </Ribbon>

        <FormulaBar>
          <NameBox aria-label="Name box" defaultValue="A1" />
          <MarkButton $w={9} aria-label="Step"><Art w={5} h={13} s="none"><path d="M2.500 0 5 4.500H0zM2.500 13 5 8.500H0z" fill="#b0b0b0" /></Art></MarkButton>
          <MarkButton $w={32} aria-label="Cancel"><Art w={8} h={8} s="#666"><path d="m.8.8 6.400 6.400M7.200.8.8 7.200" strokeWidth="1.400" /></Art></MarkButton>
          <MarkButton $w={10} aria-label="Enter"><Art w={10} h={8} s="#666"><path d="m.8 4 2.700 3L9.400.8" strokeWidth="1.400" /></Art></MarkButton>
          <MarkButton $w={27} aria-label="Insert function"><Serif>fx</Serif></MarkButton>
          <FormulaInput aria-label="Formula" defaultValue="Chapter 8: Applying Excel" />
          <MarkButton $w={12} aria-label="Expand formula bar"><Art w={5} h={5} s="none"><path d="M0 0h5L2.500 5z" fill="#c4c4c4" /></Art></MarkButton>
        </FormulaBar>

        <SheetArea>
          <Sheet>
            <colgroup>
              <col style={{ width: 28 }} /><col style={{ width: 355 }} />
              {columns.map(c => <col key={c.id} style={{ width: c.w }} />)}
              <col />
            </colgroup>
            <thead>
              <tr>
                <Corner aria-label="Select all" />
                <ColHead $on $edge="#161616">A</ColHead>
                {columns.map(c => <ColHead key={c.id} $edge={c.head}>{c.id}</ColHead>)}
                <ColHead aria-label="J" />
              </tr>
            </thead>
            <tbody>
              <SheetRow $h={2} aria-hidden="true"><RowHead /><Cell colSpan={10} /></SheetRow>
              {rows.map(r => (
                <SheetRow key={r.n} $h={r.h}>
                  <RowHead scope="row">{r.n}</RowHead>
                  <Cell $align="left" $kind={r.title ? 'title' : undefined} $edge="#f0f0f0">{r.label}</Cell>
                  {rowCells(r)}
                  <Cell $edge="#fff" />
                </SheetRow>
              ))}
            </tbody>
          </Sheet>
        </SheetArea>

        <SheetTabs aria-label="Sheets">
          <Arrow $w={27} aria-label="Previous sheet"><Art w={5} h={7} s="none"><path d="M5 0v7L0 3.500z" fill="#6c6c6c" /></Art></Arrow>
          <Arrow $w={16} aria-label="Next sheet"><Art w={16} h={7} s="none"><path d="M0 0v7l5-3.500z" fill="#6c6c6c" /></Art></Arrow>
          <SheetTab>Chapter 8 Form</SheetTab>
          <Arrow $w={26} aria-label="Add sheet"><Art w={7} h={7} s="#bdbdbd"><path d="M0 3.500h7M3.500 0v7" /></Art></Arrow>
          <TabEnd />
        </SheetTabs>
        <StatusBar>
          <ViewButton $on aria-label="Normal view"><Art w={10} h={9} s="#f0f0f0"><path d="M.5 .5h9v8h-9zM.5 3h9M.5 6h9M3.500 .5v8M6.500 .5v8" /></Art></ViewButton>
          <ViewButton aria-label="Page layout view"><Art w={10} h={9}><path d="M.5 .5h9v8h-9zM3 2.500h4v4H3zM3 4.500h4" /></Art></ViewButton>
          <ViewButton aria-label="Page break view"><Art w={10} h={9}><path d="M.5 0v8.500h9V0M3.500 0v5M6.500 0v5M3.500 4.500h3" /></Art></ViewButton>
          <ZoomButton $w={16} aria-label="Zoom out"><Art w={6} h={2} s="#fff"><path d="M0 1h6" strokeWidth="1.400" /></Art></ZoomButton>
          <ZoomSlider type="range" aria-label="Zoom" min={0} max={100} defaultValue={62} />
          <ZoomButton $w={16} aria-label="Zoom in"><Art w={6} h={6} s="#fff"><path d="M0 3h6M3 0v6" strokeWidth="1.400" /></Art></ZoomButton>
          <Percent>178%</Percent>
        </StatusBar>
      </Window>

      <Dock aria-label="Dock">
        <DockApps>
          {dockArt.map(([name, art, running]) => (
            <DockItem key={name} aria-label={name} $running={running}><DockSvg>{art}</DockSvg></DockItem>
          ))}
        </DockApps>
        <DockLine />
        <DockItem $w={52} aria-label="Preview">
          <DockSvg><path d="M3 2h24v18H3z" fill="#c0a273" /><path d="m0 5 24-3 2 20-23 4z" fill="#f2f3f4" /><path d="m2 7 21-3 1.500 16L4 23z" fill="#3f79bd" /><path d="m3 15 20-4 1.500 9L4 23z" fill="#e9edf0" /><path d="m3 13 20-2v2L3 17z" fill="#1f4474" /><circle cx="22" cy="17" r="5" fill="#6d747a" stroke="#c0c4c7" /><path d="M17 20h10l-1.500 7h-7z" fill="#8d8368" /></DockSvg>
        </DockItem>
        <DockLine />
        <DockItem $w={42} aria-label="Trash">
          <DockSvg><path d="M3 2h22l-3 24c-2 2-14 2-16 0z" fill="#666b72" /><path d="M8 3l2 23M20 3l-2 23" stroke="#757a81" /><ellipse cx="14" cy="2.500" rx="11" ry="1.500" fill="#3c4148" stroke="#8b9096" strokeWidth=".7" /></DockSvg>
        </DockItem>
      </Dock>
    </Desktop>
  );
}
